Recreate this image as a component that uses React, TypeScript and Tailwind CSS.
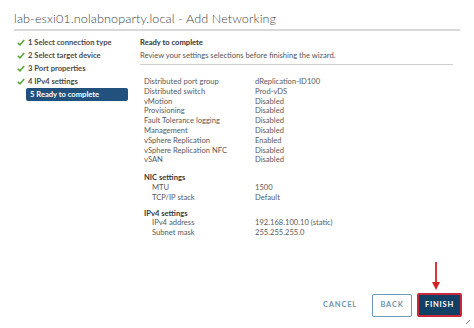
import React from "react";

const rows: [string, string][] = [
  ["Distributed port group", "dReplication-ID100"],
  ["Distributed switch", "Prod-vDS"],
  ["vMotion", "Disabled"],
  ["Provisioning", "Disabled"],
  ["Fault Tolerance logging", "Disabled"],
  ["Management", "Disabled"],
  ["vSphere Replication", "Enabled"],
  ["vSphere Replication NFC", "Disabled"],
  ["vSAN", "Disabled"],
];

const Check = () => (
  <svg width="8" height="7" viewBox="0 0 8 7" className="shrink-0">
    <path d="M0.8 3.8 L3 5.8 L7.2 1" stroke="#5aa83a" strokeWidth="1.6" fill="none" />
  </svg>
);

export default function App() {
  const font = { fontFamily: "Lato, 'Open Sans', sans-serif" };
  return (
    <div className="w-[474px] h-[328px] bg-white relative overflow-hidden" style={font}>
      <div className="pl-[14px] pr-[14px] pt-[9px]">
        <div className="text-[12.6px] leading-[19px] font-light text-[#444] tracking-[0.1px]">
          lab-esxi01.nolabnoparty.local - Add Networking
        </div>
        <div className="h-[2px] bg-[#d8d8d8] mt-[1px] w-[446px]" />
      </div>
      <div className="flex pl-[17px] pt-[5px]">
        <div className="w-[123px] flex flex-col text-[7.6px] font-bold text-[#4a4a4a]">
          {["1 Select connection type", "2 Select target device", "3 Port properties", "4 IPv4 settings"].map((s) => (
            <div key={s} className="flex items-center gap-[3px] h-[13px]">
              <Check />
              <span>{s}</span>
            </div>
          ))}
          <div className="ml-[9px] mt-[0px] w-[102px] h-[13px] rounded-[2px] bg-[#22517d] text-white flex items-center pl-[4px]">
            5 Ready to complete
          </div>
        </div>
        <div className="flex flex-col text-[7.6px] text-[#555]">
          <div className="font-bold text-[#333] leading-[13px]">Ready to complete</div>
          <div className="leading-[13px]">Review your settings selections before finishing the wizard.</div>
          <div className="h-[1px] bg-[#cfcfcf] w-[313px] mt-[2px]" />
          <div className="pl-[4px] pt-[12px] flex flex-col leading-[9.8px] text-[#5a5a5a]">
            {rows.map(([k, v]) => (
              <div key={k} className="flex">
                <span className="w-[111px]">{k}</span>
                <span>{v}</span>
              </div>
            ))}
            <div className="font-bold text-[#3a3a3a] mt-[8px]">NIC settings</div>
            <div className="flex">
              <span className="w-[111px] pl-[8px]">MTU</span>
              <span>1500</span>
            </div>
            <div className="flex">
              <span className="w-[111px] pl-[8px]">TCP/IP stack</span>
              <span>Default</span>
            </div>
            <div className="font-bold text-[#3a3a3a] mt-[6px]">IPv4 settings</div>
            <div className="flex">
              <span className="w-[111px] pl-[8px]">IPv4 address</span>
              <span>192.168.100.10 (static)</span>
            </div>
            <div className="flex">
              <span className="w-[111px] pl-[8px]">Subnet mask</span>
              <span>255.255.255.0</span>
            </div>
          </div>
        </div>
      </div>
      <div className="absolute left-0 right-0 top-[293px] flex justify-end items-center pr-[12px] gap-[5px] text-[7.5px] font-bold tracking-[0.8px]">
        <div className="h-[23px] px-[8px] mr-[2px] flex items-center text-[#6f93ab]">CANCEL</div>
        <div className="h-[23px] w-[40px] border border-[#6d9ab8] rounded-[2px] flex items-center justify-center text-[#6f93ab]">
          BACK
        </div>
        <div className="h-[24px] w-[45px] border-2 border-[#c8283a] bg-[#123f64] rounded-[2px] flex items-center justify-center text-white">
          FINISH
        </div>
      </div>
      <svg className="absolute left-[431px] top-[262px]" width="10" height="30" viewBox="0 0 10 30">
        <line x1="5" y1="0" x2="5" y2="24" stroke="#d42027" strokeWidth="1.8" />
        <path d="M1 20 L5 28 L9 20 Z" fill="#d42027" />
      </svg>
      <svg className="absolute left-[465px] top-[319px]" width="6" height="6" viewBox="0 0 6 6">
        <path d="M1 5 L5 1" stroke="#777" strokeWidth="1" />
      </svg>
    </div>
  );
}
